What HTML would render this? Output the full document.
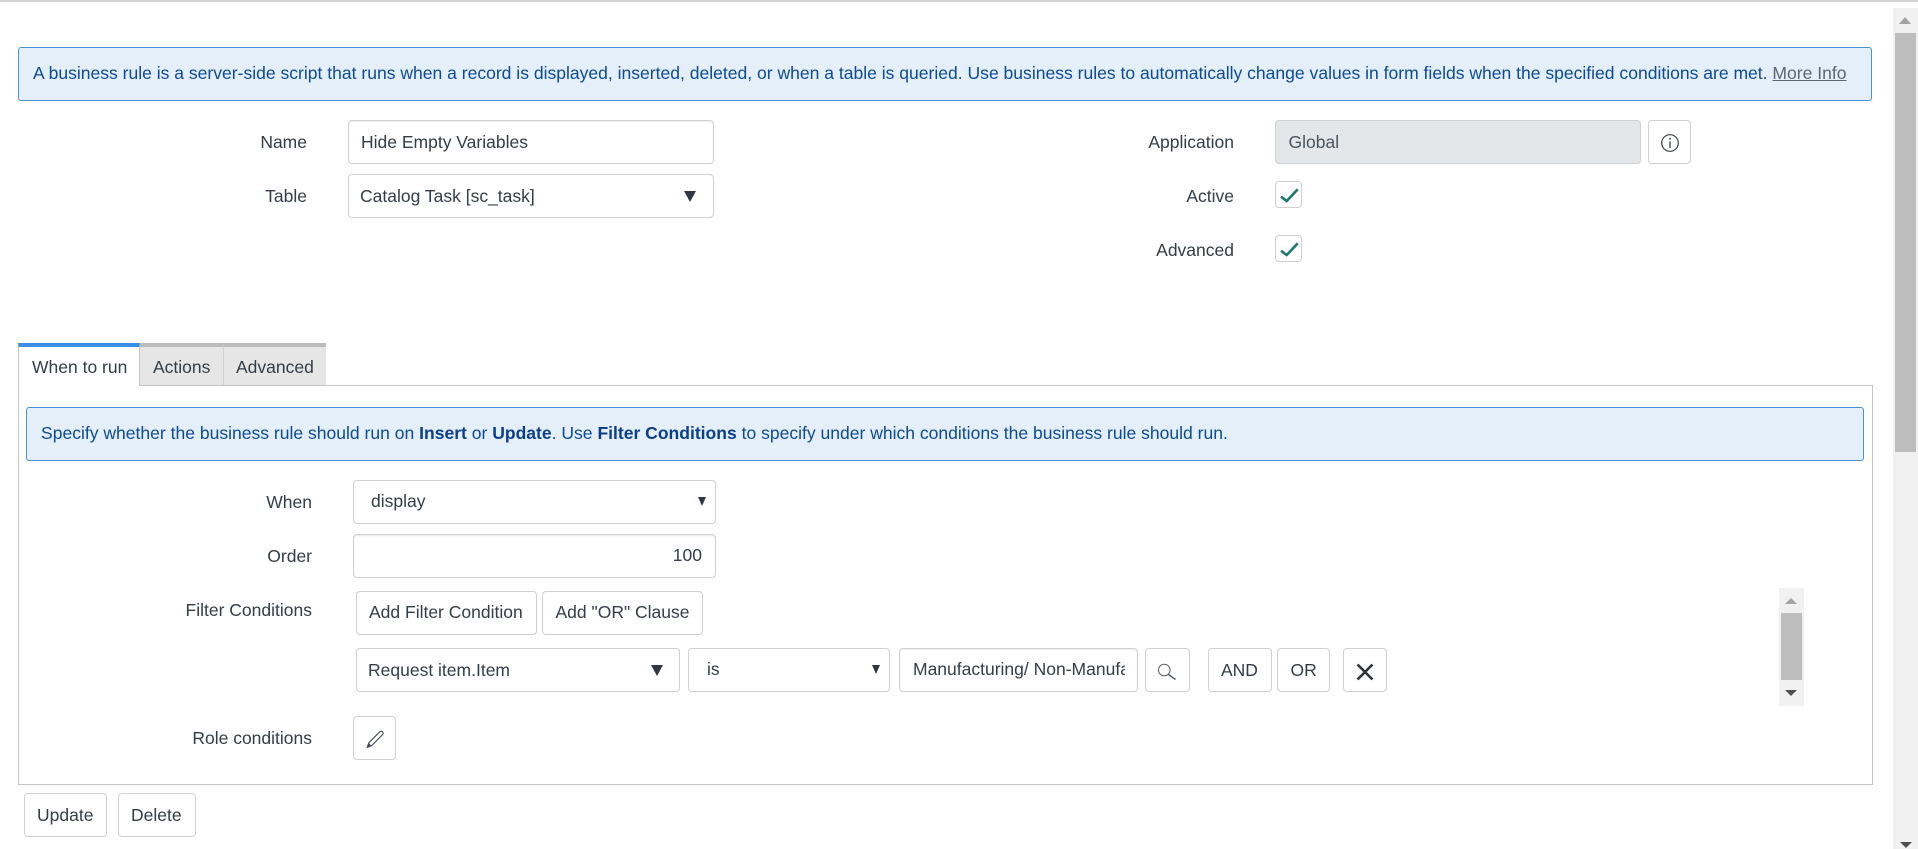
<!DOCTYPE html>
<html>
<head>
<meta charset="utf-8">
<title>Business Rule</title>
<style>
html,body{margin:0;padding:0;width:1918px;height:849px;overflow:hidden;background:#fff;}
body{position:relative;font-family:"Liberation Sans",Arial,sans-serif;font-size:17.5px;color:#343d47;filter:blur(.3px);}
.a{position:absolute;box-sizing:border-box;}
.t{position:absolute;white-space:nowrap;line-height:20px;height:20px;}
.r{text-align:right;}
.b{position:absolute;box-sizing:border-box;background:#fff;border:1px solid #d0d0d0;border-radius:4px;}
.s{box-shadow:inset 0 1px 1px rgba(0,0,0,.08);}
.alert{position:absolute;box-sizing:border-box;background:#e4eff9;border:1px solid #4a92d8;border-radius:3px;color:#0b4a99;}
svg{position:absolute;overflow:visible;}
</style>
</head>
<body>
<div class="a" style="left:0;top:0;width:1918px;height:2px;background:#d4d4d4"></div>

<!-- top alert -->
<div class="alert" style="left:18px;top:47px;width:1854px;height:54px"></div>
<div class="t" style="left:33px;top:63px;color:#0b4a99;font-size:17.54px">A business rule is a server-side script that runs when a record is displayed, inserted, deleted, or when a table is queried. Use business rules to automatically change values in form fields when the specified conditions are met. <span style="color:#5d6670;text-decoration:underline">More Info</span></div>

<!-- Name / Table -->
<div class="t r" style="left:100px;width:207px;top:132px">Name</div>
<div class="b s" style="left:348px;top:120px;width:366px;height:44px"></div>
<div class="t" style="left:361px;top:132px">Hide Empty Variables</div>
<div class="t r" style="left:100px;width:207px;top:186px">Table</div>
<div class="b" style="left:348px;top:174px;width:366px;height:44px"></div>
<div class="t" style="left:360px;top:186px">Catalog Task [sc_task]</div>
<svg style="left:684px;top:191px" width="12" height="11"><path d="M0 0H12L6 11Z" fill="#2e3742"/></svg>

<!-- Application -->
<div class="t r" style="left:1034px;width:200px;top:132px">Application</div>
<div class="b" style="left:1275px;top:120px;width:366px;height:44px;background:#e4e7ea"></div>
<div class="t" style="left:1288.5px;top:132px;color:#4b545e">Global</div>
<div class="b" style="left:1648px;top:120px;width:43px;height:44px"></div>
<svg style="left:1660px;top:133px" width="20" height="20" viewBox="0 0 20 20" fill="none" stroke="#3a424c"><circle cx="10" cy="10" r="8.3" stroke-width="1.2"/><path d="M10 8.5V15" stroke-width="1.3"/><circle cx="10" cy="5.8" r=".9" fill="#3a424c" stroke="none"/></svg>

<div class="t r" style="left:1034px;width:200px;top:186px">Active</div>
<div class="b" style="left:1275px;top:181px;width:27px;height:27px"></div>
<svg style="left:1275px;top:181px" width="27" height="27" fill="none" stroke="#1f7a6e" stroke-width="2.6"><path d="M6 15.7L11.7 20L22.7 8.3"/></svg>
<div class="t r" style="left:1034px;width:200px;top:240px">Advanced</div>
<div class="b" style="left:1275px;top:235px;width:27px;height:27px"></div>
<svg style="left:1275px;top:235px" width="27" height="27" fill="none" stroke="#1f7a6e" stroke-width="2.6"><path d="M6 15.7L11.7 20L22.7 8.3"/></svg>

<!-- panel -->
<div class="a" style="left:18px;top:385px;width:1855px;height:400px;border:1px solid #c4c4c4"></div>

<!-- tabs -->
<div class="a" style="left:18px;top:343px;width:122px;height:43px;background:#fff;border-left:1px solid #c4c4c4;border-right:1px solid #c4c4c4;border-top:4px solid #3a8ee6"></div>
<div class="a" style="left:140px;top:343px;width:84px;height:43px;background:#e6e6e6;border-top:4px solid #bcbcbc;border-right:1px solid #d0d0d0;border-bottom:1px solid #c4c4c4"></div>
<div class="a" style="left:224px;top:343px;width:102px;height:43px;background:#e6e6e6;border-top:4px solid #bcbcbc;border-bottom:1px solid #c4c4c4"></div>
<div class="t" style="left:32px;top:357px">When to run</div>
<div class="t" style="left:153px;top:357px">Actions</div>
<div class="t" style="left:236px;top:357px">Advanced</div>

<!-- inner alert -->
<div class="alert" style="left:26px;top:407px;width:1838px;height:54px"></div>
<div class="t" style="left:41px;top:423px;color:#0b4a99;font-size:17.54px">Specify whether the business rule should run on <b style="color:#0a3f8c">Insert</b> or <b style="color:#0a3f8c">Update</b>. Use <b style="color:#0a3f8c">Filter Conditions</b> to specify under which conditions the business rule should run.</div>

<!-- When / Order -->
<div class="t r" style="left:100px;width:212px;top:492px">When</div>
<div class="b" style="left:353px;top:480px;width:363px;height:44px"></div>
<div class="t" style="left:371px;top:491px">display</div>
<svg style="left:698px;top:497px" width="8" height="9"><path d="M0 0H8L4 9Z" fill="#2e3742"/></svg>
<div class="t r" style="left:100px;width:212px;top:546px">Order</div>
<div class="b s" style="left:353px;top:534px;width:363px;height:44px"></div>
<div class="t r" style="left:600px;width:102px;top:545px">100</div>

<!-- Filter -->
<div class="t r" style="left:100px;width:212px;top:600px">Filter Conditions</div>
<div class="b" style="left:356px;top:591px;width:181px;height:44px"></div>
<div class="t" style="left:369px;top:602px">Add Filter Condition</div>
<div class="b" style="left:542px;top:591px;width:161px;height:44px"></div>
<div class="t" style="left:555.5px;top:602px">Add "OR" Clause</div>

<div class="b" style="left:356px;top:648px;width:324px;height:44px"></div>
<div class="t" style="left:368px;top:660px">Request item.Item</div>
<svg style="left:651px;top:665px" width="12" height="11"><path d="M0 0H12L6 11Z" fill="#2e3742"/></svg>
<div class="b" style="left:688px;top:648px;width:202px;height:44px"></div>
<div class="t" style="left:707px;top:659px">is</div>
<svg style="left:872px;top:665px" width="8" height="9"><path d="M0 0H8L4 9Z" fill="#2e3742"/></svg>
<div class="b s" style="left:899px;top:648px;width:239px;height:44px"></div>
<div class="t" style="left:913px;top:659px;width:212px;overflow:hidden">Manufacturing/ Non-Manufacturing</div>
<div class="b" style="left:1145px;top:648px;width:45px;height:44px"></div>
<svg style="left:1155px;top:660px" width="24" height="24" fill="none" stroke="#555c66"><circle cx="9.3" cy="10" r="5.8" stroke-width="1"/><path d="M13.5 14.5L20.5 19.5" stroke-width="1.4"/></svg>
<div class="b" style="left:1208px;top:648px;width:64px;height:44px"></div>
<div class="t" style="left:1221px;top:660px">AND</div>
<div class="b" style="left:1277px;top:648px;width:53px;height:44px"></div>
<div class="t" style="left:1290.5px;top:660px">OR</div>
<div class="b" style="left:1343px;top:648px;width:44px;height:44px"></div>
<svg style="left:1357px;top:664px" width="16" height="16" fill="none" stroke="#2f3338" stroke-width="2.6"><path d="M.5 .5L15.5 15.5M15.5 .5L.5 15.5"/></svg>

<!-- Role -->
<div class="t r" style="left:100px;width:212px;top:728px">Role conditions</div>
<div class="b" style="left:353px;top:716px;width:43px;height:44px"></div>
<svg style="left:365px;top:729px" width="20" height="20" fill="none" stroke="#454c55" stroke-width="1.1"><path d="M2.3 18.3L3.8 13.8L14.8 2.8C15.6 2 16.8 2 17.6 2.8C18.4 3.6 18.4 4.8 17.6 5.6L6.6 16.6Z"/><path d="M2.3 18.3L3.6 14.6L5.8 16.8Z" fill="#454c55"/></svg>

<!-- inner scrollbar -->
<div class="a" style="left:1779px;top:588px;width:25px;height:118px;background:#f1f1f1"></div>
<div class="a" style="left:1781px;top:613px;width:21px;height:67px;background:#bdbdbd"></div>
<svg style="left:1785px;top:598px" width="12" height="6"><path d="M0 6H12L6 0Z" fill="#a3a3a3"/></svg>
<svg style="left:1785px;top:690px" width="12" height="6"><path d="M0 0H12L6 6Z" fill="#505050"/></svg>

<!-- buttons -->
<div class="b" style="left:24px;top:793px;width:83px;height:44px"></div>
<div class="t" style="left:37px;top:805px">Update</div>
<div class="b" style="left:118px;top:793px;width:78px;height:44px"></div>
<div class="t" style="left:131px;top:805px">Delete</div>

<!-- page scrollbar -->
<div class="a" style="left:1893px;top:8px;width:25px;height:841px;background:#f1f1f1"></div>
<div class="a" style="left:1895px;top:33px;width:21px;height:419px;background:#bdbdbd"></div>
<svg style="left:1899px;top:17px" width="12" height="7"><path d="M0 7H12L6 0Z" fill="#a3a3a3"/></svg>
<svg style="left:1900px;top:842px" width="12" height="6"><path d="M0 0H12L6 6Z" fill="#505050"/></svg>
</body>
</html>
